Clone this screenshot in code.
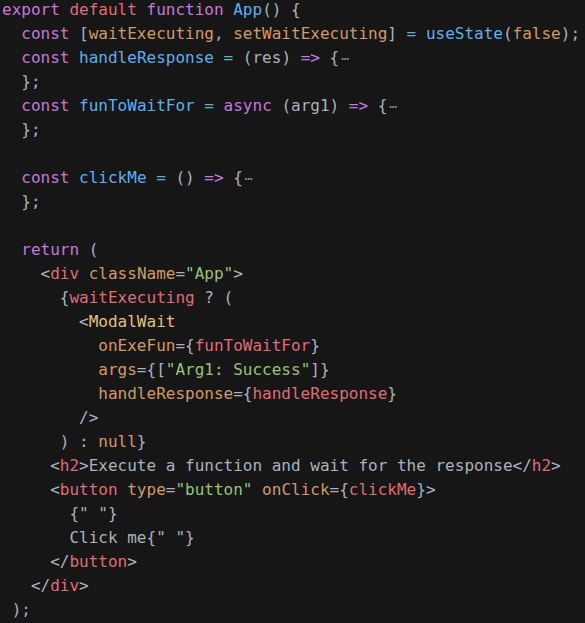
type Tok = [string, string];

const P = "text-[#c678dd]";
const R = "text-[#e06c75]";
const O = "text-[#d19a66]";
const C = "text-[#56b6c2]";
const G = "text-[#abb2bf]";
const Y = "text-[#e5c07b]";
const S = "text-[#98c379]";
const B = "text-[#61afef]";
const F = "fold";

const lines: Tok[][] = [
  [["export", P], [" ", G], ["default", R], [" ", G], ["function", P], [" ", G], ["App", B], ["() {", G]],
  [["  ", G], ["const", P], [" [", G], ["waitExecuting", O], [", ", G], ["setWaitExecuting", O], ["] ", G], ["=", C], [" ", G], ["useState", B], ["(", G], ["false", O], [");", G]],
  [["  ", G], ["const", P], [" ", G], ["handleResponse", B], [" ", G], ["=", C], [" (res) ", G], ["=>", P], [" {", G], ["", F]],
  [["  };", G]],
  [["  ", G], ["const", P], [" ", G], ["funToWaitFor", B], [" ", G], ["=", C], [" ", G], ["async", P], [" (arg1) ", G], ["=>", P], [" {", G], ["", F]],
  [["  };", G]],
  [],
  [["  ", G], ["const", P], [" ", G], ["clickMe", B], [" ", G], ["=", C], [" () ", G], ["=>", P], [" {", G], ["", F]],
  [["  };", G]],
  [],
  [["  ", G], ["return", P], [" (", G]],
  [["    <", G], ["div", R], [" ", G], ["className", O], ["=", G], ['"App"', S], [">", G]],
  [["      {", G], ["waitExecuting", R], [" ? (", G]],
  [["        <", G], ["ModalWait", Y]],
  [["          ", G], ["onExeFun", O], ["={", G], ["funToWaitFor", R], ["}", G]],
  [["          ", G], ["args", O], ["={[", G], ['"Arg1: Success"', S], ["]}", G]],
  [["          ", G], ["handleResponse", O], ["={", G], ["handleResponse", R], ["}", G]],
  [["        />", G]],
  [["      ) : ", G], ["null", O], ["}", G]],
  [["     <", G], ["h2", R], [">Execute a function and wait for the response</", G], ["h2", R], [">", G]],
  [["     <", G], ["button", R], [" ", G], ["type", O], ["=", G], ['"button"', S], [" ", G], ["onClick", O], ["={", G], ["clickMe", R], ["}>", G]],
  [['       {" "}', G]],
  [['       Click me{" "}', G]],
  [["     </", G], ["button", R], [">", G]],
  [["   </", G], ["div", R], [">", G]],
  [[" );", G]],
];

export default function App() {
  return (
    <div className="w-[585px] h-[623px] overflow-hidden bg-[#161616]">
      <div
        className="-mt-[2px] pl-[2px] text-[16px] leading-[24px] whitespace-pre text-[#abb2bf]"
        style={{ fontFamily: '"DejaVu Sans Mono", "Liberation Mono", monospace' }}
      >
        {lines.map((line, i) => (
          <div key={i} className="h-[24px]">
            {line.map(([text, cls], j) =>
              cls === F ? (
                <span key={j} className="ml-[2px] text-[13px] text-[#8b919c]">
                  ⋯
                </span>
              ) : (
                <span key={j} className={cls}>
                  {text}
                </span>
              )
            )}
          </div>
        ))}
      </div>
    </div>
  );
}
